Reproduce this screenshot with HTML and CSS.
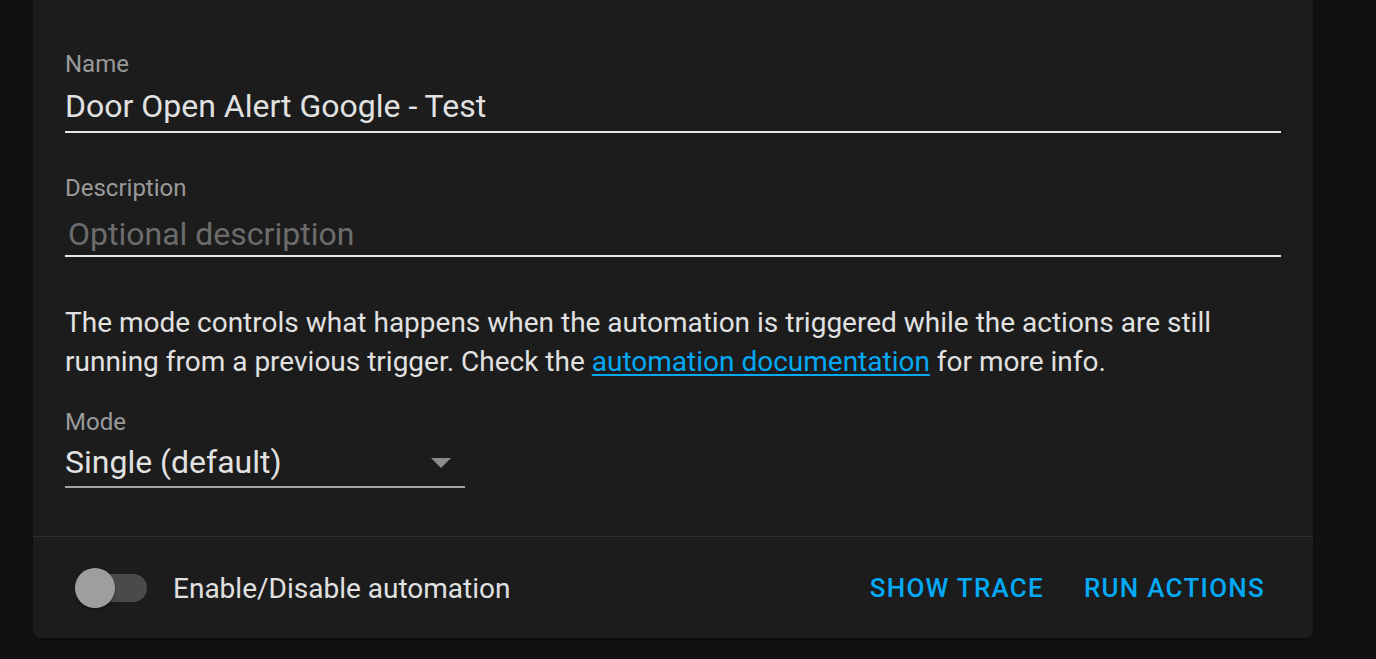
FILE: index.html
```html
<!DOCTYPE html>
<html lang="en">
<head>
<meta charset="utf-8">
<title>Automation settings</title>
<link rel="stylesheet" href="styles.css">
</head>
<body>
<main class="page">
  <section class="card">
    <div class="card-content">
      <div class="field name-field">
        <div class="field-label">Name</div>
        <div class="field-input">Door Open Alert Google - Test</div>
      </div>
      <div class="field desc-field">
        <div class="field-label">Description</div>
        <div class="field-input placeholder">Optional description</div>
      </div>
      <p class="mode-help">The mode controls what happens when the automation is triggered while the actions are still running from a previous trigger. Check the <a href="#" class="link">automation documentation</a> for more info.</p>
      <div class="field select">
        <div class="field-label">Mode</div>
        <div class="field-input select-input">
          <span>Single (default)</span>
          <span class="arrow"></span>
        </div>
      </div>
    </div>
    <div class="card-actions">
      <div class="switch">
        <span class="track"></span>
        <span class="thumb"></span>
      </div>
      <span class="switch-label">Enable/Disable automation</span>
      <div class="buttons">
        <button class="btn">SHOW TRACE</button>
        <button class="btn">RUN ACTIONS</button>
      </div>
    </div>
  </section>
</main>
</body>
</html>
```
FILE: styles.css
```css
html, body {
  margin: 0;
  padding: 0;
  background: #111111;
  font-family: Roboto, "Noto Sans", "Liberation Sans", sans-serif;
  color: #e1e1e1;
}

.page {
  padding-left: 33px;
  height: 659px;
  box-sizing: border-box;
  overflow: hidden;
}

.card {
  width: 1280px;
  background: #1c1c1c;
  border-radius: 0 0 8px 8px;
  box-shadow: 0 2px 4px rgba(0, 0, 0, 0.25);
}

.card-content {
  padding: 50px 32px 48px 32px;
  display: flex;
  flex-direction: column;
}

.field-label {
  font-size: 24px;
  line-height: 28px;
  color: #9a9a9a;
}

.field-input {
  font-size: 32px;
  line-height: 40px;
  color: #e1e1e1;
  border-bottom: 2px solid #e6e6e6;
}

.name-field .field-label { margin-bottom: 8px; }
.name-field .field-input { padding-bottom: 5px; }

.desc-field { margin-top: 41px; }
.desc-field .field-label { margin-bottom: 12px; }
.desc-field .field-input { padding-bottom: 1px; }

.placeholder {
  color: #6c6c6c;
  padding-left: 3px;
}

.mode-help {
  margin: 46px 0 0 0;
  font-size: 28px;
  line-height: 39px;
  color: #e1e1e1;
}

.link {
  color: #03a9f4;
  text-decoration: underline;
  text-underline-offset: 3px;
}

.select {
  margin-top: 27px;
  width: 400px;
}

.select .field-label { margin-bottom: 6px; }

.select-input {
  display: flex;
  align-items: center;
  justify-content: space-between;
  padding-bottom: 4px;
  border-bottom-color: #a3a3a3;
}

.arrow {
  width: 0;
  height: 0;
  border-left: 10px solid transparent;
  border-right: 10px solid transparent;
  border-top: 10px solid #8c8c8c;
  margin-right: 14px;
  margin-top: 2px;
}

.card-actions {
  border-top: 1px solid #2f2f2f;
  height: 102px;
  box-sizing: border-box;
  display: flex;
  align-items: center;
  padding: 1px 32px 0 42px;
}

.switch {
  position: relative;
  width: 72px;
  height: 40px;
  display: flex;
  align-items: center;
}

.track {
  width: 72px;
  height: 28px;
  border-radius: 14px;
  background: #4a4a4a;
}

.thumb {
  position: absolute;
  left: 0;
  top: 0;
  width: 40px;
  height: 40px;
  border-radius: 50%;
  background: #9e9e9e;
  box-shadow: 0 2px 3px rgba(0, 0, 0, 0.35);
}

.switch-label {
  margin-left: 26px;
  font-size: 28px;
  color: #e1e1e1;
}

.buttons {
  margin-left: auto;
  display: flex;
  gap: 8px;
}

.btn {
  background: none;
  border: none;
  padding: 0 16px;
  height: 72px;
  font-family: Roboto, "Noto Sans", "Liberation Sans", sans-serif;
  font-size: 26px;
  font-weight: 500;
  letter-spacing: 1.25px;
  color: #03a9f4;
  cursor: pointer;
}
```
